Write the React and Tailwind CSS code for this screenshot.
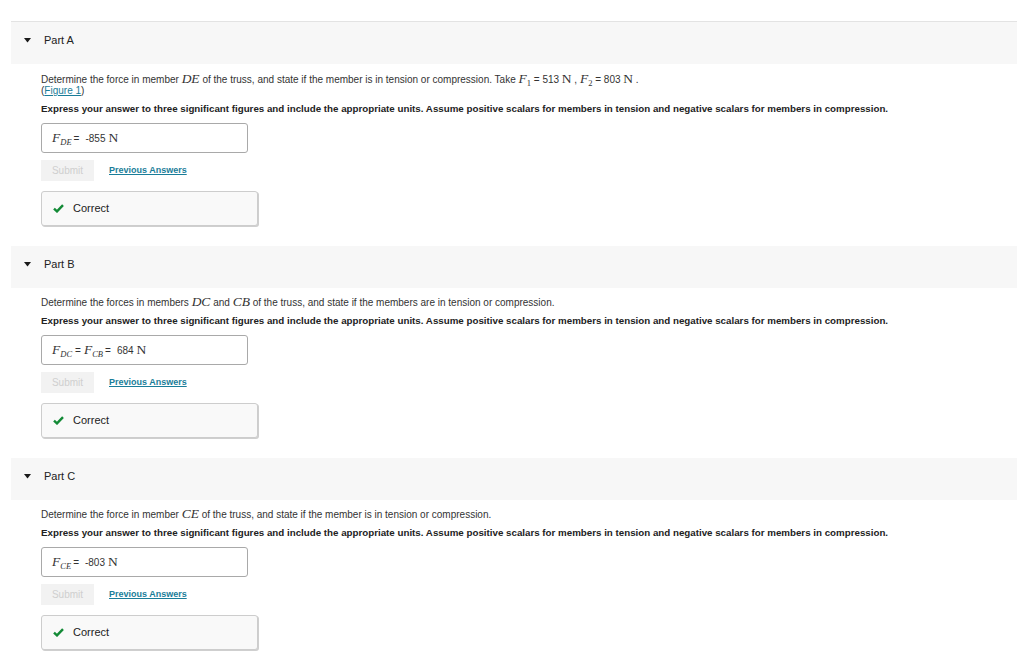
import React from 'react';

const serif = { fontFamily: '"Liberation Serif", "Times New Roman", serif' };

function M({ children }) {
  return (
    <span className="italic text-[13.5px] leading-[12px]" style={serif}>
      {children}
    </span>
  );
}

function F({ sub, upright }) {
  return (
    <span className="leading-[12px]" style={serif}>
      <span className="italic text-[13.5px] leading-[12px]">F</span>
      <span className={`text-[8.5px] leading-[8px] relative top-[3px] ${upright ? '' : 'italic'}`}>
        {sub}
      </span>
    </span>
  );
}

function Unit() {
  return (
    <span className="text-[13.5px] leading-[12px]" style={serif}>
      N
    </span>
  );
}

function Caret() {
  return (
    <svg width="7" height="5" viewBox="0 0 7 5" className="shrink-0">
      <path d="M0 0 H7 L3.5 4.5 Z" fill="#1a1a1a" />
    </svg>
  );
}

function Check() {
  return (
    <svg width="11" height="9" viewBox="0 0 11 9" className="shrink-0">
      <path d="M1 4.6 L4 7.4 L10 1.2" fill="none" stroke="#138a36" strokeWidth="2.4" />
    </svg>
  );
}

function Part({ label, first, desc, figure, answer }) {
  return (
    <section>
      <div
        className={`bg-[#f7f7f7] flex items-start ${first ? 'border-t border-[#e3e3e3] h-[43px] pt-[12px]' : 'h-[42px] pt-[12px]'}`}
      >
        <div className="flex items-center h-[13px]">
          <span className="ml-[13px] flex">
            <Caret />
          </span>
          <span className="ml-[13px] text-[11px] leading-[13px] text-[#222]">{label}</span>
        </div>
      </div>

      <div className={`pl-[30px] pb-[20px] ${first ? 'pt-[9px]' : 'pt-[8px]'}`}>
        <div className="h-[12px] text-[10px] leading-[12px] text-[#333] whitespace-nowrap">
          {desc}
        </div>
        {figure && (
          <div className="h-[12px] text-[10px] leading-[12px] text-[#333]">
            (<span className="text-[#1a7d99] underline">Figure 1</span>)
          </div>
        )}
        <div
          className={`${figure ? 'mt-[6px]' : 'mt-[7px]'} h-[12px] text-[9.75px] leading-[12px] font-bold text-[#222] whitespace-nowrap`}
        >
          Express your answer to three significant figures and include the appropriate units. Assume
          positive scalars for members in tension and negative scalars for members in compression.
        </div>

        <div className="mt-[8px] w-[207px] h-[30px] border border-[#a9a9a9] rounded-[3px] flex items-center pl-[10px] text-[10px] text-[#333]">
          <span className="whitespace-nowrap">{answer}</span>
        </div>

        <div className="mt-[7px] flex items-center">
          <div className="w-[53px] h-[21px] bg-[#f2f2f2] text-[#cfcfcf] text-[10px] flex items-center justify-center">
            Submit
          </div>
          <span className="ml-[15px] text-[9px] font-bold text-[#1a7d99] underline">
            Previous Answers
          </span>
        </div>

        <div className="mt-[10px] w-[217px] h-[35px] bg-[#f9f9f9] border border-[#cdcdcd] rounded-[3px] shadow-[1px_1px_0_#cfcfcf] flex items-center pl-[11px]">
          <Check />
          <span className="ml-[9px] text-[11px] text-[#222]">Correct</span>
        </div>
      </div>
    </section>
  );
}

function Value({ v }) {
  return (
    <>
      <span className="ml-[2px]">=</span>
      <span className="ml-[6px]">{v}</span>
      <span className="ml-[3px]">
        <Unit />
      </span>
    </>
  );
}

export default function App() {
  return (
    <div
      className="bg-white min-h-screen w-full pt-[21px] pl-[11px]"
      style={{ fontFamily: '"Liberation Sans", Arial, sans-serif' }}
    >
      <Part
        label="Part A"
        first
        figure
        desc={
          <>
            Determine the force in member <M>DE</M> of the truss, and state if the member is in
            tension or compression. Take <F sub="1" upright /> = 513 <Unit /> ,{' '}
            <F sub="2" upright /> = 803 <Unit /> .
          </>
        }
        answer={
          <>
            <F sub="DE" />
            <Value v="-855" />
          </>
        }
      />
      <Part
        label="Part B"
        desc={
          <>
            Determine the forces in members <M>DC</M> and <M>CB</M> of the truss, and state if the
            members are in tension or compression.
          </>
        }
        answer={
          <>
            <F sub="DC" />
            <span className="mx-[3px]">=</span>
            <F sub="CB" />
            <Value v="684" />
          </>
        }
      />
      <Part
        label="Part C"
        desc={
          <>
            Determine the force in member <M>CE</M> of the truss, and state if the member is in
            tension or compression.
          </>
        }
        answer={
          <>
            <F sub="CE" />
            <Value v="-803" />
          </>
        }
      />
    </div>
  );
}
